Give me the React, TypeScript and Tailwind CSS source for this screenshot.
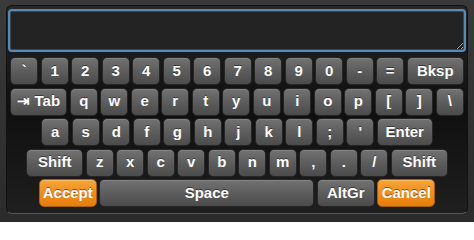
const rows: string[][] = [
  ["`", "1", "2", "3", "4", "5", "6", "7", "8", "9", "0", "-", "=", "Bksp"],
  ["⇥ Tab", "q", "w", "e", "r", "t", "y", "u", "i", "o", "p", "[", "]", "\\"],
  ["a", "s", "d", "f", "g", "h", "j", "k", "l", ";", "'", "Enter"],
  ["Shift", "z", "x", "c", "v", "b", "n", "m", ",", ".", "/", "Shift"],
  ["Accept", "Space", "AltGr", "Cancel"],
];

// widths for the non-character keys
const wide: Record<string, string> = {
  Bksp: "w-[57px]",
  "⇥ Tab": "w-[57px]",
  Enter: "w-[56px]",
  Shift: "w-[57px]",
  Accept: "w-[58px]",
  Space: "w-[215px]",
  AltGr: "w-[58px]",
  Cancel: "w-[58px]",
};

function Key({ label }: { label: string }) {
  const action = label === "Accept" || label === "Cancel";
  return (
    <div
      className={`${wide[label] ?? "w-[28px]"} h-[28px] shrink-0 flex items-center justify-center rounded-[5px] border text-[15px] font-bold text-white [text-shadow:0_-1px_0_rgba(0,0,0,0.45)] ${
        action
          ? "bg-linear-to-b from-[#f8a43a] via-[#f08d1c] to-[#e47f0c] border-[#a85e0e] shadow-[inset_0_1px_0_rgba(255,255,255,0.25)]"
          : "bg-linear-to-b from-[#727272] via-[#5d5d5d] to-[#4b4b4b] border-[#262626] shadow-[inset_0_1px_0_rgba(255,255,255,0.12)]"
      }`}
    >
      {label}
    </div>
  );
}

export default function App() {
  return (
    <div className="w-[474px] h-[222px] overflow-hidden bg-linear-to-b from-[#3a3a3a] to-[#2b2b2b] pt-[5px] px-[6px] font-['Liberation_Sans',Arial,sans-serif]">
      <div className="h-[209px] rounded-[6px] border border-[#111] border-b-[#555] bg-linear-to-b from-[#272727] via-[#0f0f0f] to-[#1f1f1f] px-[1px] pt-[3px]">
        {/* input field */}
        <textarea
          readOnly
          className="block w-full h-[43px] rounded-[4px] border-2 border-[#5b89b6] bg-[#232323] outline-none shadow-[inset_0_0_0_1px_rgba(140,180,220,0.25)]"
        />

        {/* key rows */}
        <div className="mt-[5px] flex flex-col gap-[2.5px]">
          {rows.map((row, i) => (
            <div key={i} className="flex justify-center gap-[2.5px]">
              {row.map((k, j) => (
                <Key key={j} label={k} />
              ))}
            </div>
          ))}
        </div>
      </div>
    </div>
  );
}
